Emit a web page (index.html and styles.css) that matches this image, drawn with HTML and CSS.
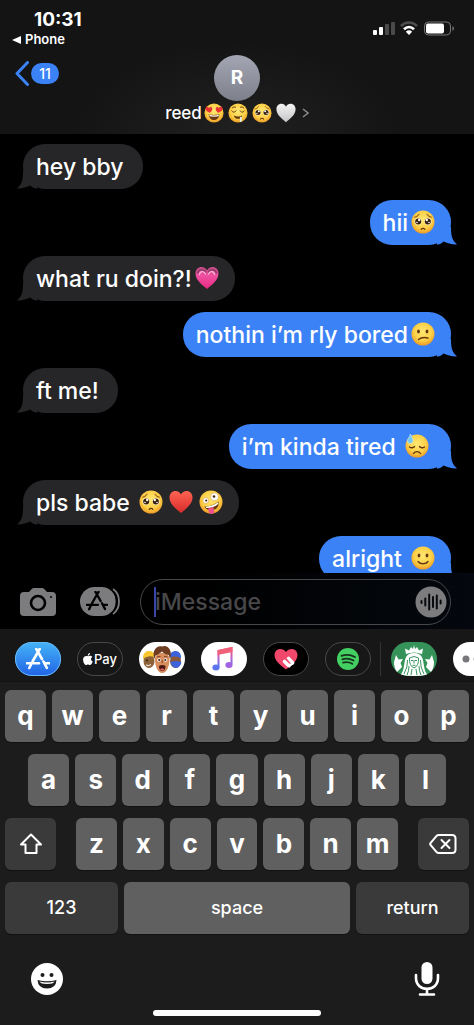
FILE: index.html
```html
<!DOCTYPE html>
<html lang="en">
<head>
    <meta charset="UTF-8">
    <meta name="viewport" content="width=device-width, initial-scale=1">
    <title>Messages</title>
    <link rel="stylesheet" href="styles.css">
</head>
<body>

    <!-- Shared emoji and icon shapes -->
    <svg class="sprite" width="0" height="0" aria-hidden="true">
        <defs>
            <radialGradient id="skin" cx="50%" cy="40%" r="60%">
                <stop offset="0" stop-color="#ffe873"/>
                <stop offset="0.65" stop-color="#fdcf46"/>
                <stop offset="1" stop-color="#ec9b26"/>
            </radialGradient>
            <linearGradient id="red-fill" x1="0" y1="0" x2="0" y2="1">
                <stop offset="0" stop-color="#ff6351"/>
                <stop offset="1" stop-color="#d62b2c"/>
            </linearGradient>
            <linearGradient id="white-fill" x1="0" y1="0" x2="0" y2="1">
                <stop offset="0" stop-color="#f4f4f4"/>
                <stop offset="1" stop-color="#c4c4c6"/>
            </linearGradient>
            <linearGradient id="pink-fill" x1="0" y1="0" x2="0" y2="1">
                <stop offset="0" stop-color="#c24c86"/>
                <stop offset="0.4" stop-color="#f04f9f"/>
                <stop offset="1" stop-color="#e52a86"/>
            </linearGradient>
            <linearGradient id="store-fill" x1="0" y1="0" x2="0" y2="1">
                <stop offset="0" stop-color="#45b4f6"/>
                <stop offset="1" stop-color="#2163e6"/>
            </linearGradient>
            <linearGradient id="music-fill" x1="0" y1="0" x2="0" y2="1">
                <stop offset="0" stop-color="#f4596f"/>
                <stop offset="0.5" stop-color="#c35fc9"/>
                <stop offset="1" stop-color="#4a7cf0"/>
            </linearGradient>

            <symbol id="heart" viewBox="0 0 24 24">
                <path d="M12 23C8 19.500 .5 14.500 .5 7.500C.5 3.500 3.200 1 6.500 1C9 1 11 2.300 12 4.500C13 2.300 15 1 17.500 1C20.800 1 23.500 3.500 23.500 7.500C23.500 14.500 16 19.500 12 23Z"/>
            </symbol>
            <symbol id="growing-heart" viewBox="0 0 24 24">
                <path fill="url(#pink-fill)" d="M12 23C8 19.500 .5 14.500 .5 7.500C.5 3.500 3.200 1 6.500 1C9 1 11 2.300 12 4.500C13 2.300 15 1 17.500 1C20.800 1 23.500 3.500 23.500 7.500C23.500 14.500 16 19.500 12 23Z"/>
                <path d="M2.500 7.500C3 3.500 8.500 2 11 6.500M21.500 7.500C21 3.500 15.500 2 13 6.500" fill="none" stroke="#8f3a67" stroke-width="1.500"/>
                <path d="M4.500 8.500C5 5 9 4.500 10.500 8M19.500 8.500C19 5 15 4.500 13.500 8" fill="none" stroke="#ffb3d8" stroke-width="1.300" stroke-linecap="round"/>
            </symbol>
            <symbol id="heart-eyes" viewBox="0 0 24 24">
                <circle cx="12" cy="12" r="11.500" fill="url(#skin)"/>
                <path d="M5.500 13.500C9 14.500 15 14.500 18.500 13.500C18 18 15.500 20.500 12 20.500C8.500 20.500 6 18 5.500 13.500Z" fill="#6d3a12"/>
                <path d="M6.200 14.200C9.500 15.200 14.500 15.200 17.800 14.200L17.300 16C14 16.800 10 16.800 6.700 16Z" fill="#fff"/>
                <path d="M7 11.800C4.500 10.500 1.200 9 1.800 6.200C2.300 4.200 5 4 6 6C7.300 4.200 10 4.800 10 7C10 9 8.500 10.500 7 11.800ZM17 11.800C19.500 10.500 22.800 9 22.200 6.200C21.700 4.200 19 4 18 6C16.700 4.200 14 4.800 14 7C14 9 15.500 10.500 17 11.800Z" fill="#ea3434"/>
            </symbol>
            <symbol id="drooling" viewBox="0 0 24 24">
                <circle cx="12" cy="12" r="11.500" fill="url(#skin)"/>
                <path d="M4.500 9.500C5.500 11.500 8.500 11.500 9.500 9.500M14.500 9.500C15.500 11.500 18.500 11.500 19.500 9.500M5 6C6 4.800 7.500 4.500 9 5M15 5C16.500 4.500 18 4.800 19 6" fill="none" stroke="#65390f" stroke-width="1.200" stroke-linecap="round"/>
                <path d="M7 15C10 16.500 14 16.500 17 15C16.500 17.800 14.500 19 12 19C9.500 19 7.500 17.800 7 15Z" fill="#65390f"/>
                <path d="M14.500 17C15.200 16 16.500 16.500 16.500 17.500V21.500C16.500 23 14.200 23 14.200 21.500Z" fill="#dff2ee"/>
            </symbol>
            <symbol id="pleading" viewBox="0 0 24 24">
                <circle cx="12" cy="12" r="11.500" fill="url(#skin)"/>
                <path d="M3.500 7.200C5.500 6.800 7 5.800 8 4.200M20.500 7.200C18.500 6.800 17 5.800 16 4.200" fill="none" stroke="#99601b" stroke-width="1.100" stroke-linecap="round"/>
                <circle cx="7" cy="11.500" r="3.500" fill="#fff2cf"/>
                <circle cx="17" cy="11.500" r="3.500" fill="#fff2cf"/>
                <circle cx="7.200" cy="11.400" r="3" fill="#39200d"/>
                <circle cx="16.800" cy="11.400" r="3" fill="#39200d"/>
                <g fill="#fff">
                    <circle cx="8.200" cy="10" r="1.200"/>
                    <circle cx="15.800" cy="10" r="1.200"/>
                    <circle cx="6" cy="12.500" r=".8"/>
                    <circle cx="18" cy="12.500" r=".8"/>
                </g>
                <path d="M10.200 19.300C11 18 13 18 13.800 19.300" fill="none" stroke="#65390f" stroke-width="1.300" stroke-linecap="round"/>
            </symbol>
            <symbol id="confused" viewBox="0 0 24 24">
                <circle cx="12" cy="12" r="11.500" fill="url(#skin)"/>
                <ellipse cx="7.500" cy="9.500" rx="1.400" ry="1.900" fill="#65390f"/>
                <ellipse cx="16" cy="9.500" rx="1.400" ry="1.900" fill="#65390f"/>
                <path d="M7.500 17.500C10 15.500 13.500 15 17 16" fill="none" stroke="#65390f" stroke-width="1.400" stroke-linecap="round"/>
            </symbol>
            <symbol id="sweat" viewBox="0 0 24 24">
                <circle cx="12" cy="12" r="11.500" fill="url(#skin)"/>
                <path d="M4.500 13C6 14.200 8.500 14 9.500 12.500M14.500 12.500C15.500 14 18 14.200 19.500 13M8.500 19.500C10 17 14 17 15.500 19.500" fill="none" stroke="#65390f" stroke-width="1.400" stroke-linecap="round"/>
                <path d="M5.500 0C6.500 3 8.500 4.800 8 7.200C7.500 10 3 10.200 2.500 7.200C2.200 5 4.800 3 5.500 0Z" fill="#73c9f2" stroke="#c8efff" stroke-width=".6"/>
            </symbol>
            <symbol id="zany" viewBox="0 0 24 24">
                <circle cx="12" cy="12" r="11.500" fill="url(#skin)"/>
                <circle cx="15.500" cy="6.800" r="4" fill="#fff" stroke="#c98e2c" stroke-width=".5"/>
                <circle cx="6.800" cy="10.500" r="2.900" fill="#fff" stroke="#c98e2c" stroke-width=".5"/>
                <circle cx="15" cy="6.500" r="1.300" fill="#4a280d"/>
                <circle cx="7.200" cy="10.500" r="1.100" fill="#4a280d"/>
                <path d="M5.500 16.500C11 16.500 16 14.500 19.500 11.500C20.500 16.500 17 20 12.500 20.300C9.500 20.500 6.500 19 5.500 16.500Z" fill="#6d3a12"/>
                <path d="M6.500 16.700C11 16.500 15.500 15 19.200 12.300V14C15.500 17 11.500 18 7.300 18Z" fill="#fff"/>
                <path d="M9 18.500L14.500 17.300L15.200 21.500C15.300 24.500 10.500 24.800 9.800 22Z" fill="#f0518d"/>
            </symbol>
            <symbol id="smile" viewBox="0 0 24 24">
                <circle cx="12" cy="12" r="11.500" fill="url(#skin)"/>
                <ellipse cx="8" cy="9.500" rx="1.400" ry="2" fill="#65390f"/>
                <ellipse cx="16" cy="9.500" rx="1.400" ry="2" fill="#65390f"/>
                <path d="M7 15.500C9 18.500 15 18.500 17 15.500" fill="none" stroke="#65390f" stroke-width="1.400" stroke-linecap="round"/>
            </symbol>
            <symbol id="tail" viewBox="0 0 20 18">
                <path d="M6 0C6 9 5 13 0 17.500C5 17.800 10 16 13.500 14.500C15.500 16.500 17 17.200 20 17.800V0Z"/>
            </symbol>
            <symbol id="store-a" viewBox="0 0 24 22">
                <path d="M10.300 1L16 11M17.500 13.500L20.800 19.800M13.700 1L6.500 13.500M4.800 17L3.300 20M1 15.200H13M18.500 15.200H23" fill="none" stroke="currentColor" stroke-width="2.600" stroke-linecap="round"/>
            </symbol>
        </defs>
    </svg>

    <!-- Header -->
    <header class="header">
        <div class="status">
            <div class="status-left">
                <div class="clock">10:31</div>
                <a class="return-app" href="#">
                    <svg width="9" height="8" viewBox="0 0 9 8" aria-hidden="true"><path d="M0 4L9 0V8Z" fill="#fff"/></svg>
                    Phone
                </a>
            </div>
            <svg class="status-icons" width="82" height="16" viewBox="0 0 82 16" aria-hidden="true">
                <rect x="0" y="9" width="4" height="5" rx="1" fill="#fff"/>
                <rect x="6" y="6" width="4" height="8" rx="1" fill="#fff"/>
                <rect x="12" y="3" width="4" height="11" rx="1" fill="#4a4a4a"/>
                <rect x="18" y="1" width="4" height="13" rx="1" fill="#4a4a4a"/>
                <path d="M28 5C32.500 .4 39.500 .4 44 5" fill="none" stroke="#4d4d4d" stroke-width="2.600"/>
                <path d="M31 8.200C34 5.300 38 5.300 41 8.200" fill="none" stroke="#fff" stroke-width="2.600"/>
                <path d="M32.800 10.700C34.800 8.900 37.200 8.900 39.200 10.700L36 14Z" fill="#fff"/>
                <rect x="51.500" y="1" width="26" height="13" rx="4" fill="none" stroke="#777"/>
                <rect x="53" y="2.500" width="18" height="10" rx="2" fill="#fff"/>
                <path d="M79.500 5V10C81.500 9 81.500 6 79.500 5Z" fill="#777"/>
            </svg>
        </div>
        <div class="nav">
            <a class="back" href="#" aria-label="Back, 11 unread">
                <svg width="14" height="25" viewBox="0 0 14 25" aria-hidden="true"><path d="M12.500 1.500L2 12.500L12.500 23.500" fill="none" stroke="#3b82f7" stroke-width="3" stroke-linecap="round" stroke-linejoin="round"/></svg>
                <span class="unread">11</span>
            </a>
            <div class="contact">
                <div class="avatar">R</div>
                <a class="contact-name" href="#">
                    <span>reed</span>
                    <svg class="emoji" role="img" aria-label="😍"><use href="#heart-eyes"/></svg>
                    <svg class="emoji" role="img" aria-label="🤤"><use href="#drooling"/></svg>
                    <svg class="emoji" role="img" aria-label="🥺"><use href="#pleading"/></svg>
                    <svg class="emoji" role="img" aria-label="🤍" fill="url(#white-fill)"><use href="#heart"/></svg>
                    <svg class="chevron" width="7" height="10" viewBox="0 0 7 10" aria-hidden="true"><path d="M1 1L6 5L1 9" fill="none" stroke="#8b8b8f" stroke-width="1.500"/></svg>
                </a>
            </div>
        </div>
    </header>

    <!-- Conversation -->
    <main class="thread">
        <div class="bubble received">hey bby&nbsp;<svg class="tail"><use href="#tail"/></svg></div>
        <div class="bubble sent">hii<svg class="emoji" role="img" aria-label="🥺"><use href="#pleading"/></svg><svg class="tail"><use href="#tail"/></svg></div>
        <div class="bubble received">what ru doin?!<svg class="emoji" role="img" aria-label="💗"><use href="#growing-heart"/></svg><svg class="tail"><use href="#tail"/></svg></div>
        <div class="bubble sent">nothin i’m rly bored<svg class="emoji" role="img" aria-label="😕"><use href="#confused"/></svg><svg class="tail"><use href="#tail"/></svg></div>
        <div class="bubble received">ft me!&nbsp;<svg class="tail"><use href="#tail"/></svg></div>
        <div class="bubble sent">i’m kinda tired&nbsp;<svg class="emoji" role="img" aria-label="😓"><use href="#sweat"/></svg>&nbsp;<svg class="tail"><use href="#tail"/></svg></div>
        <div class="bubble received">pls babe&nbsp;<svg class="emoji" role="img" aria-label="🥺"><use href="#pleading"/></svg><svg class="emoji" role="img" aria-label="❤️" fill="url(#red-fill)"><use href="#heart"/></svg><svg class="emoji" role="img" aria-label="🤪"><use href="#zany"/></svg><svg class="tail"><use href="#tail"/></svg></div>
        <div class="bubble sent">alright&nbsp;<svg class="emoji" role="img" aria-label="🙂"><use href="#smile"/></svg><svg class="tail"><use href="#tail"/></svg></div>
    </main>

    <!-- Message box -->
    <form class="compose">
        <div class="tools">
            <button type="button" aria-label="Camera">
                <svg width="36" height="28" viewBox="0 0 36 28">
                    <path d="M4 4H9L12 .8Q12.700 0 14 0H22Q23.300 0 24 .8L27 4H32Q36 4 36 8V24Q36 28 32 28H4Q0 28 0 24V8Q0 4 4 4Z" fill="#7c7c7e"/>
                    <circle cx="18" cy="15" r="7" fill="#7c7c7e" stroke="#000" stroke-width="2.600"/>
                    <circle cx="31" cy="9" r="1" fill="#000"/>
                </svg>
            </button>
            <button type="button" aria-label="Apps">
                <svg class="apps-icon" width="40" height="30" viewBox="0 0 40 30">
                    <rect x="0" y="0" width="36" height="29" rx="14.500" fill="#7c7c7e"/>
                    <path d="M33 2C41 7.500 41 21.500 33 27" fill="none" stroke="#7c7c7e" stroke-width="1.800"/>
                    <path d="M30 1.500C38.500 7 38.500 22 30 27.500" fill="none" stroke="#000" stroke-width="1.300"/>
                    <use href="#store-a" x="6" y="4" width="22" height="20"/>
                </svg>
            </button>
        </div>
        <div class="message-box">
            <input type="text" id="message" placeholder="iMessage" aria-label="iMessage">
            <span class="caret"></span>
            <button type="button" aria-label="Record audio">
                <svg width="32" height="32" viewBox="0 0 32 32">
                    <circle cx="16" cy="16" r="15.500" fill="#7c7c7e"/>
                    <path d="M6.500 15V17M10.300 12.500V19.500M14.200 8.500V23.500M18 11V21M21.800 9.500V22.500M25.600 14.500V17.500" stroke="#080a0d" stroke-width="2" stroke-linecap="round"/>
                </svg>
            </button>
        </div>
    </form>

    <!-- App strip -->
    <nav class="app-strip">
        <div class="apps">
            <button type="button" class="app app-store" aria-label="App Store">
                <svg width="46" height="34" viewBox="0 0 46 34"><rect width="46" height="34" rx="17" fill="url(#store-fill)"/><rect x=".5" y=".5" width="45" height="33" rx="16.500" fill="none" stroke="#69b9f4"/><use href="#store-a" x="11" y="6" width="24" height="22"/></svg>
            </button>
            <button type="button" class="app app-dark" aria-label="Apple Pay">
                <svg width="10" height="12" viewBox="0 0 10 12"><path d="M5 3.200C6 3.200 7.800 2 9.300 3.900C7.300 5.200 7.800 7.800 9.800 8.500C9 10.500 8 12 6.800 11.900C6 11.600 4.800 11.200 3.600 11.900C1.600 12.500 -.4 8.500 .2 5.600C.7 2.800 3.500 2.500 5 3.200ZM4.800 2.700C4.700 1.300 5.800 .2 7 0C7.200 1.300 6.100 2.600 4.800 2.700Z" fill="#fff"/></svg><span>Pay</span>
            </button>
            <button type="button" class="app" aria-label="Memoji">
                <svg width="46" height="34" viewBox="0 0 46 34">
                    <rect width="46" height="34" rx="17" fill="#fff"/>
                    <ellipse cx="10" cy="19" rx="5.500" ry="7" fill="#8d6238"/>
                    <path d="M4 17C3.500 11 7.500 8.500 10.500 9C14 9 16 12 16 15.500C12 13.500 8 14 4 17Z" fill="#f8c62e"/>
                    <circle cx="8" cy="18.500" r="1" fill="#32200f"/><path d="M7 23Q10 24.500 12 22.500" fill="none" stroke="#fff"/>
                    <ellipse cx="36.500" cy="19" rx="5.500" ry="7" fill="#8c5835"/>
                    <path d="M31 16C30 11 33 9 37 9C40.500 9.500 42.500 12 42 17C39 14 34 14 31 16ZM31.500 20Q37 18 42.500 20Q41.500 25.500 37 26Q32.500 25.500 31.500 20Z" fill="#3d62da"/>
                    <path d="M16 17C16 9 30.500 9 30.500 17C30.500 25 27.500 31 23.200 31C19 31 16 25 16 17Z" fill="#d98c5c"/>
                    <path d="M15.500 17C12.500 9 17.500 3 23 4.500C28.500 2 34 8 31 17L29.800 13C27 12.500 24 11 23 9.500C20.500 12 18 13 16.500 13.500Z" fill="#6d3c21"/>
                    <ellipse cx="20" cy="18" rx="1.900" ry="1.700" fill="#fff"/><ellipse cx="26.500" cy="18" rx="1.900" ry="1.700" fill="#fff"/>
                    <circle cx="20.200" cy="18" r="1.100" fill="#3b2414"/><circle cx="26.300" cy="18" r="1.100" fill="#3b2414"/>
                    <path d="M18 14.900L21.500 14.500M25 14.500L28.500 14.900M23.200 18V21" stroke="#7c4424"/>
                    <path d="M20 24Q23.200 22 26.500 24Q26.500 29 23.200 29Q20 29 20 24Z" fill="#4b1714"/><ellipse cx="23.200" cy="27.500" rx="2" ry="1.100" fill="#e46666"/>
                </svg>
            </button>
            <button type="button" class="app" aria-label="Music">
                <svg width="46" height="34" viewBox="0 0 46 34"><rect width="46" height="34" rx="17" fill="#fff"/><path d="M17.500 25V9L30.500 6V22" fill="none" stroke="url(#music-fill)" stroke-width="2"/><path d="M16.500 8L31.500 5V10L16.500 13Z" fill="#f0607a"/><ellipse cx="15" cy="25.500" rx="3.600" ry="3" fill="#5a75ee"/><ellipse cx="28" cy="23" rx="3.600" ry="3" fill="#a263e3"/></svg>
            </button>
            <button type="button" class="app app-black" aria-label="Digital Touch">
                <svg width="24" height="22" viewBox="0 0 24 22"><path d="M12 21.500C7 17.500 .5 13 .5 7C.5 0 9 -1 12 4C15 -1 23.500 0 23.500 7C23.500 13 17 17.500 12 21.500Z" fill="#f0476b"/><path d="M10.500 13.500L14 17M14.500 10.500L18.500 15" stroke="#fff" stroke-width="3.600" stroke-linecap="round"/><path d="M13.500 17.500L19 12.500L20.500 15L15 20Z" fill="#fff"/><path d="M12.500 10.800L16.500 15.500" stroke="#f0476b" stroke-width="1"/></svg>
            </button>
            <button type="button" class="app app-dark" aria-label="Spotify">
                <svg width="22" height="22" viewBox="0 0 22 22"><circle cx="11" cy="11" r="11" fill="#43cf61"/><path d="M4.500 7.800C9 6.400 14 6.900 18 9M5.300 11.300C9 10.200 13 10.700 16.500 12.500M6 14.600C9 13.800 12.500 14.200 15.300 15.700" fill="none" stroke="#17321d" stroke-width="1.800" stroke-linecap="round"/></svg>
            </button>
        </div>
        <div class="apps apps-more">
            <button type="button" class="app" aria-label="Starbucks">
                <svg width="46" height="34" viewBox="0 0 46 34">
                    <rect width="46" height="34" rx="17" fill="#35935a"/>
                    <g fill="#fff">
                        <path d="M15 12L14 6.500L18 8.500L20 5L22 7L23 3L24 7L26 5L28 8.500L32 6.500L31 12Q23 9 15 12Z"/>
                        <path d="M23 11C14 11 14 18 13 24C12.500 28 11 31 10 32.500Q16 34 23 34Q30 34 36 32.500C35 31 33.500 28 33 24C32 18 32 11 23 11Z"/>
                        <path d="M3 20L5 13L7.500 17.500L12 17L9.500 21L11 25L6 30Q3 26 3 20ZM43 20L41 13L38.500 17.500L34 17L36.500 21L35 25L40 30Q43 26 43 20Z"/>
                    </g>
                    <path d="M18.500 16Q23 13 27.500 16Q28 24 23 26Q18 24 18.500 16Z" fill="#fff" stroke="#35935a" stroke-width="1"/>
                    <path d="M16.500 18Q17 25 13 32M18 24Q18 29 16 33M29.500 18Q29 25 33 32M28 24Q28 29 30 33M21 27L20 33M25 27L26 33M20 18.500H22M24 18.500H26M23 18V21.500M21.500 23.300H24.500" fill="none" stroke="#35935a" stroke-width="1"/>
                </svg>
            </button>
            <button type="button" class="app" aria-label="More">
                <svg width="46" height="34" viewBox="0 0 46 34"><rect width="46" height="34" rx="17" fill="#fff"/><circle cx="13" cy="17" r="3.500" fill="#77777b"/><circle cx="22" cy="17" r="2" fill="#c6c6ca"/><circle cx="31" cy="17" r="2" fill="#c6c6ca"/></svg>
            </button>
        </div>
    </nav>

    <!-- Keyboard -->
    <section class="keyboard" aria-label="Keyboard">
        <div class="key-row">
            <button class="key">q</button>
            <button class="key">w</button>
            <button class="key">e</button>
            <button class="key">r</button>
            <button class="key">t</button>
            <button class="key">y</button>
            <button class="key">u</button>
            <button class="key">i</button>
            <button class="key">o</button>
            <button class="key">p</button>
        </div>
        <div class="key-row key-row-inset">
            <button class="key">a</button>
            <button class="key">s</button>
            <button class="key">d</button>
            <button class="key">f</button>
            <button class="key">g</button>
            <button class="key">h</button>
            <button class="key">j</button>
            <button class="key">k</button>
            <button class="key">l</button>
        </div>
        <div class="key-row key-row-shift">
            <button class="key key-dark key-side" aria-label="Shift">
                <svg width="24" height="22" viewBox="0 0 24 22"><path d="M12 1.500L22 11.500H17.500V20H6.500V11.500H2Z" fill="none" stroke="#fff" stroke-width="2" stroke-linejoin="round"/></svg>
            </button>
            <div class="key-row letters">
                <button class="key">z</button>
                <button class="key">x</button>
                <button class="key">c</button>
                <button class="key">v</button>
                <button class="key">b</button>
                <button class="key">n</button>
                <button class="key">m</button>
            </div>
            <button class="key key-dark key-side" aria-label="Delete">
                <svg width="28" height="20" viewBox="0 0 28 20"><path d="M9.500 1H23Q26.500 1 26.500 4.500V15.500Q26.500 19 23 19H9.500Q8.500 19 7.800 18.300L1.500 11Q.8 10 1.500 9L7.800 1.700Q8.500 1 9.500 1Z" fill="none" stroke="#fff" stroke-width="2"/><path d="M12.500 6L20.500 14M20.500 6L12.500 14" stroke="#fff" stroke-width="2" stroke-linecap="round"/></svg>
            </button>
        </div>
        <div class="key-row">
            <button class="key key-dark key-word">123</button>
            <button class="key key-word key-space">space</button>
            <button class="key key-dark key-word">return</button>
        </div>
        <div class="keyboard-footer">
            <button type="button" aria-label="Emoji">
                <svg width="32" height="34" viewBox="0 0 32 34"><circle cx="16" cy="17" r="16" fill="#fff"/><circle cx="11.500" cy="13" r="2" fill="#1c1c1c"/><circle cx="20.500" cy="13" r="2" fill="#1c1c1c"/><path d="M6.500 18Q16 20.500 25.500 18Q25 26.500 16 26.500Q7 26.500 6.500 18Z" fill="#1c1c1c"/><path d="M8.500 19.500Q16 21.500 23.500 19.500Q22.500 22 16 22Q9.500 22 8.500 19.500Z" fill="#fff"/></svg>
            </button>
            <button type="button" aria-label="Dictate">
                <svg width="26" height="34" viewBox="0 0 26 34"><rect x="7.500" y="0" width="11" height="22" rx="5.500" fill="#fff"/><path d="M2 13V16C2 30.500 24 30.500 24 16V13M13 27V32M6 32.500H20" fill="none" stroke="#fff" stroke-width="2.600" stroke-linecap="round"/></svg>
            </button>
        </div>
        <div class="home-bar"></div>
    </section>

</body>
</html>
```
FILE: styles.css
```css
/* Base Styles */
* {
    box-sizing: border-box;
}

body {
    margin: 0;
    height: 100vh;
    display: flex;
    flex-direction: column;
    overflow: hidden;
    background-color: #000;
    color: #fff;
    font-family: Inter, "Liberation Sans", sans-serif;
}

a {
    color: inherit;
    text-decoration: none;
}

button {
    padding: 0;
    border: none;
    background: none;
    color: inherit;
    font-family: inherit;
    cursor: pointer;
}

svg {
    display: block;
    flex: none;
}

.sprite {
    position: absolute;
}

/* Header */
.header {
    height: 134px;
    background: radial-gradient(ellipse at 50% 100%, #202020, #141414 50%);
}

.status {
    display: flex;
    justify-content: space-between;
    height: 55px;
    padding: 8px 19px 0 12px;
}

.clock {
    padding-left: 22px;
    font-size: 19px;
    line-height: 24px;
    font-weight: 700;
}

.return-app {
    display: flex;
    align-items: center;
    gap: 4px;
    font-size: 13px;
    line-height: 15px;
    font-weight: 600;
}

.status-icons {
    margin-top: 13px;
}

.nav {
    display: grid;
    grid-template-columns: 1fr auto 1fr;
    align-items: start;
    padding: 0 15px;
}

.back {
    display: flex;
    align-items: center;
    gap: 2px;
    padding-top: 6px;
}

.unread {
    width: 28px;
    border-radius: 11px;
    background-color: #3b82f7;
    font-size: 14px;
    line-height: 21px;
    font-weight: 500;
    text-align: center;
}

.contact {
    display: flex;
    flex-direction: column;
    align-items: center;
}

.avatar {
    width: 46px;
    border-radius: 50%;
    background: linear-gradient(#a4a7b3, #7d808b);
    font-size: 19px;
    line-height: 46px;
    font-weight: 700;
    text-align: center;
}

.contact-name {
    display: flex;
    align-items: center;
    gap: 4px;
    font-size: 17px;
    line-height: 24px;
    font-weight: 500;
}

.contact-name .emoji {
    width: 20px;
    height: 20px;
}

.contact-name span {
    margin-right: -2px;
}

.chevron {
    margin-left: 2px;
}

/* Conversation */
.thread {
    flex: 1;
    min-height: 0;
    display: flex;
    flex-direction: column;
    align-items: flex-start;
    gap: 11px;
    padding: 10px 23px 0;
    overflow: hidden;
}

.bubble {
    position: relative;
    flex: none;
    display: flex;
    align-items: center;
    padding: 1px 13px 0;
    border-radius: 22px;
    font-size: 23px;
    line-height: 44px;
    font-weight: 500;
    white-space: nowrap;
}

.received {
    background-color: #262628;
    fill: #262628;
}

.sent {
    align-self: flex-end;
    background-color: #3b82f7;
    fill: #3b82f7;
}

.bubble .emoji {
    width: 24px;
    height: 24px;
    margin: 0 3px 2px;
}

.tail {
    position: absolute;
    bottom: 0;
    left: -6px;
    width: 20px;
    height: 18px;
}

.sent .tail {
    left: auto;
    right: -6px;
    transform: scaleX(-1);
}

/* Message box */
.compose {
    display: flex;
    align-items: center;
    gap: 20px;
    padding: 6px 23px 4px 20px;
    background: linear-gradient(to right, #000 40%, #04080e);
}

.tools {
    display: flex;
    flex: none;
    align-items: center;
    gap: 24px;
}

.apps-icon {
    color: #000;
}

.message-box {
    position: relative;
    flex: 1;
    min-width: 0;
    display: flex;
    align-items: center;
    height: 46px;
    padding: 0 3px 0 14px;
    border: 1px solid #48484a;
    border-radius: 23px;
}

.message-box input {
    flex: 1;
    min-width: 0;
    padding: 0;
    border: none;
    outline: none;
    background: none;
    color: #fff;
    font-family: inherit;
    font-size: 23px;
    font-weight: 500;
}

.message-box input::placeholder {
    color: #48484a;
    opacity: 1;
}

.caret {
    position: absolute;
    left: 13px;
    width: 2px;
    height: 30px;
    background-color: #3846a8;
}

/* App strip */
.app-strip {
    display: flex;
    align-items: center;
    height: 53px;
    padding: 8px 0 0 15px;
    border-bottom: 1px solid #121212;
    background-color: #171717;
    overflow: hidden;
}

.apps {
    display: flex;
    flex: none;
    gap: 16px;
}

.apps-more {
    margin-left: 9px;
    padding-left: 10px;
    border-left: 1px solid #333;
}

.app {
    display: flex;
    flex: none;
    align-items: center;
    justify-content: center;
    gap: 1px;
    width: 46px;
    height: 34px;
    border-radius: 17px;
    font-size: 13px;
    font-weight: 500;
}

.app-dark,
.app-black {
    border: 1px solid #484848;
}

.app-black {
    background-color: #000;
}

/* Keyboard */
.keyboard {
    display: flex;
    flex-direction: column;
    gap: 12px;
    padding: 8px 5px 9px;
    background-color: #1c1c1c;
}

.key-row {
    display: flex;
    gap: 6px;
}

.key-row-inset {
    padding: 0 23px;
}

.key-row-shift {
    gap: 20px;
}

.letters {
    flex: 1;
}

.key {
    flex: 1 1 0;
    display: flex;
    align-items: center;
    justify-content: center;
    height: 52px;
    padding-bottom: 2px;
    border-radius: 6px;
    background-color: #606060;
    box-shadow: 0 1px 0 #111;
    font-size: 26px;
    font-weight: 700;
}

.key-dark {
    background-color: #3a3a3a;
}

.key-side {
    flex: 0 0 11%;
    padding-bottom: 0;
}

.key-word {
    font-size: 18px;
    font-weight: 500;
}

.key-space {
    flex-grow: 2;
}

.keyboard-footer {
    display: flex;
    justify-content: space-between;
    padding: 16px 29px 2px 26px;
}

.home-bar {
    align-self: center;
    width: 36%;
    height: 6px;
    border-radius: 3px;
    background-color: #fff;
}
```
